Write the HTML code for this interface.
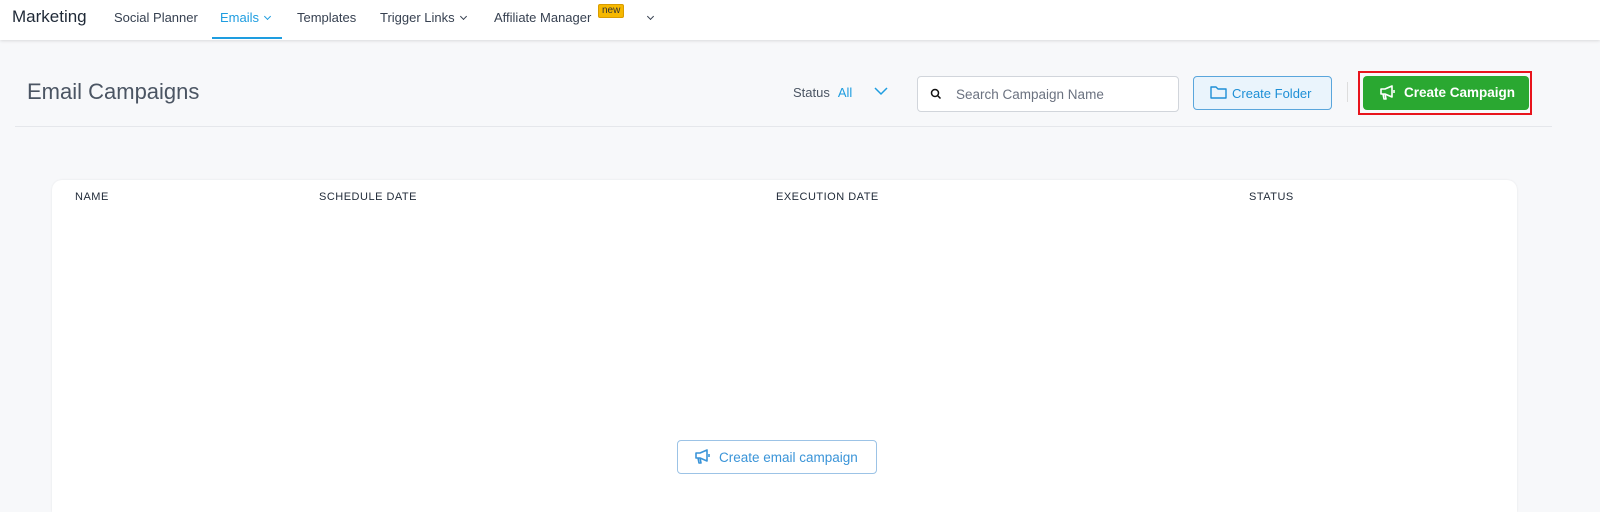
<!DOCTYPE html>
<html style="width:1600px;height:512px;overflow:hidden"><head><meta charset="utf-8"><style>
*{box-sizing:border-box;margin:0;padding:0}
body{width:1600px;height:512px;overflow:hidden;background:#f7f8fa;font-family:"Liberation Sans",sans-serif;position:relative;color:#374151}
.top{position:absolute;left:0;top:0;width:1600px;height:40px;background:#fff;box-shadow:0 1px 3px rgba(0,0,0,.12)}
.top span{position:absolute;top:10px;font-size:13px;color:#374151}
.brand{left:12px;top:7px!important;font-size:17px!important;color:#1f2937!important}
.act{color:#1e9de0!important}
.uline{position:absolute;left:212px;top:37px;width:70px;height:2px;background:#1e9de0}
.new{position:absolute;left:598px;top:4px;background:#f6b800;border:1px solid #d99c00;color:#333;font-size:10px;padding:0 3px;border-radius:2px;line-height:12px}
.chev{display:inline-block;width:5px;height:5px;border-right:1.5px solid currentColor;border-bottom:1.5px solid currentColor;transform:rotate(45deg);margin-left:6px;position:relative;top:-3px}
h1{position:absolute;left:27px;top:79px;font-size:22px;font-weight:normal;color:#4b5563}
.div{position:absolute;left:15px;top:126px;width:1537px;height:1px;background:#e5e7eb}
.status{position:absolute;left:793px;top:85px;font-size:13px;color:#4b5563}
.status b{font-weight:normal;color:#1e9de0;margin-left:8px}
.search{position:absolute;left:917px;top:76px;width:262px;height:36px;background:#fff;border:1px solid #d1d5db;border-radius:4px;font-size:13.5px;color:#6b7280;padding:10px 0 0 38px}
.folder{position:absolute;left:1193px;top:76px;width:139px;height:34px;background:#eaf4fc;border:1px solid #5aa6dc;border-radius:4px;color:#1e8fd6;font-size:13px;padding:9px 0 0 38px}
.sep{position:absolute;left:1347px;top:82px;width:1px;height:20px;background:#ddd}
.red{position:absolute;left:1358px;top:71px;width:174px;height:44px;border:2px solid #e8141c}
.green{position:absolute;left:1363px;top:76px;width:166px;height:34px;background:#2aa831;border-radius:4px;color:#fff;font-size:13.5px;font-weight:bold;padding:9px 0 0 41px}
.card{position:absolute;left:52px;top:180px;width:1465px;height:332px;background:#fff;border-radius:10px 10px 0 0;box-shadow:0 0 2px rgba(0,0,0,.08)}
.th{position:absolute;top:191px;font-size:11px;letter-spacing:.5px;color:#1f2937}
.cec{position:absolute;left:677px;top:440px;width:200px;height:34px;border:1px solid #9cc3e6;border-radius:4px;color:#3a94d8;font-size:13.5px;padding:9px 0 0 41px;background:#fff}
svg{position:absolute}
</style></head><body>
<div class="top">
<span class="brand">Marketing</span>
<span style="left:114px">Social Planner</span>
<span class="act" style="left:220px">Emails<i class="chev"></i></span>
<span style="left:297px">Templates</span>
<span style="left:380px">Trigger Links<i class="chev"></i></span>
<span style="left:494px">Affiliate Manager</span>
<div class="new">new</div>
<span style="left:642px"><i class="chev"></i></span>
<div class="uline"></div>
</div>
<h1>Email Campaigns</h1>
<div class="div"></div>
<div class="status">Status<b>All</b></div>
<svg style="left:874px;top:86px" width="14" height="10" viewBox="0 0 14 10"><path d="M1 2l6 6 6-6" fill="none" stroke="#1e9de0" stroke-width="1.5"/></svg>
<div class="search">Search Campaign Name</div>
<svg style="left:930px;top:88px" width="12" height="12" viewBox="0 0 12 12"><circle cx="5" cy="5" r="3.5" fill="none" stroke="#111" stroke-width="1.5"/><path d="M7.5 7.5l3 3" stroke="#111" stroke-width="1.5"/></svg>
<div class="folder">Create Folder</div>
<svg style="left:1210px;top:85px" width="17" height="15" viewBox="0 0 17 15"><path d="M1 2h5l2 2h8v9H1z" fill="none" stroke="#1e8fd6" stroke-width="1.4" stroke-linejoin="round"/></svg>
<div class="sep"></div>
<div class="red"></div>
<div class="green">Create Campaign</div>
<svg style="left:1379px;top:85px" width="18" height="16" viewBox="0 0 18 16"><path d="M2 4h4l7-3v11l-7-3H2z M4 9l1 5h2l-1-5 M15 5v3" fill="none" stroke="#fff" stroke-width="1.6" stroke-linejoin="round"/></svg>
<div class="card"></div>
<div class="th" style="left:75px">NAME</div>
<div class="th" style="left:319px">SCHEDULE DATE</div>
<div class="th" style="left:776px">EXECUTION DATE</div>
<div class="th" style="left:1249px">STATUS</div>
<div class="cec">Create email campaign</div>
<svg style="left:694px;top:449px" width="18" height="16" viewBox="0 0 18 16"><path d="M2 4h4l7-3v11l-7-3H2z M4 9l1 5h2l-1-5 M15 5v3" fill="none" stroke="#3a94d8" stroke-width="1.6" stroke-linejoin="round"/></svg>
</body></html>
